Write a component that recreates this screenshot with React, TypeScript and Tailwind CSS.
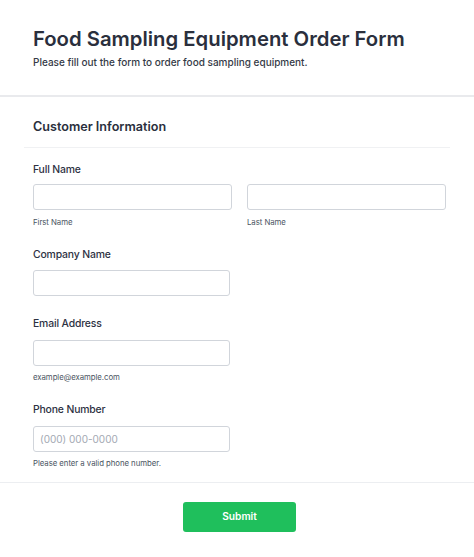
import React from "react";

const inputCls =
  "block h-[26px] w-full rounded-[3px] border border-[#d1d5db] bg-white px-[6px] text-[10px] text-[#374151] placeholder:text-[#a3a9b3] outline-none";

function Label({ children }: { children: React.ReactNode }) {
  return <div className="text-[10.4px] font-medium leading-[14px] tracking-[-0.15px] text-[#2d3142]">{children}</div>;
}

function Sub({ children, mt = "mt-[7px]" }: { children: React.ReactNode; mt?: string }) {
  return <div className={`${mt} text-[7.8px] leading-[10px] tracking-[-0.05px] text-[#4b5563]`}>{children}</div>;
}

export default function App() {
  return (
    <div className="min-h-[557px] w-[474px] bg-white text-[#2d3142]" style={{ fontFamily: "Inter, 'Noto Sans', sans-serif" }}>
      <div className="border-b-2 border-[#e9eaed] px-[33px] pb-[26px] pt-[26px]">
        <h1 className="text-[20.3px] font-semibold leading-[26px] text-[#2a2f3d]">
          Food Sampling Equipment Order Form
        </h1>
        <p className="mt-[3px] text-[10px] font-medium leading-[14px] text-[#343a46]">
          Please fill out the form to order food sampling equipment.
        </p>
      </div>
      <div className="px-[24px]">
        <div className="border-b border-[#f0f1f3] px-[9px] pb-[11px] pt-[21px]">
          <h2 className="text-[12.6px] font-semibold leading-[18px] text-[#2a2f3d]">Customer Information</h2>
        </div>
        <div className="pl-[9px] pr-[4px]">
          <div className="pt-[15px]">
            <Label>Full Name</Label>
            <div className="mt-[7px] flex gap-[15px]">
              <div className="flex-1">
                <input className={inputCls} />
                <Sub>First Name</Sub>
              </div>
              <div className="flex-1">
                <input className={inputCls} />
                <Sub>Last Name</Sub>
              </div>
            </div>
          </div>
          <div className="pt-[21px]">
            <Label>Company Name</Label>
            <div className="mt-[8px] w-[197px]">
              <input className={inputCls} />
            </div>
          </div>
          <div className="pt-[21px]">
            <Label>Email Address</Label>
            <div className="mt-[9px] w-[197px]">
              <input className={inputCls} />
              <Sub mt="mt-[6px]">example@example.com</Sub>
            </div>
          </div>
          <div className="pt-[21px]">
            <Label>Phone Number</Label>
            <div className="mt-[9px] w-[197px]">
              <input className={inputCls} placeholder="(000) 000-0000" />
              <Sub mt="mt-[6px]">Please enter a valid phone number.</Sub>
            </div>
          </div>
        </div>
      </div>
      <div className="mt-[14px] flex justify-center border-t border-[#eceef1] pt-[19px]">
        <button className="ml-[5px] h-[30px] w-[113px] rounded-[3px] bg-[#1fbf5c] text-[10.2px] font-semibold text-white">
          Submit
        </button>
      </div>
    </div>
  );
}
